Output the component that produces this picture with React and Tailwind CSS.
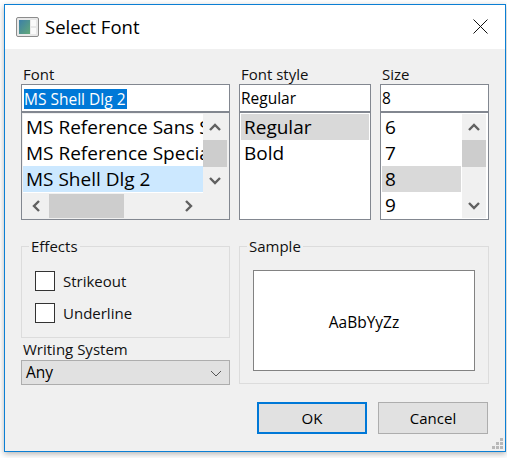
import React from 'react';

const font = { fontFamily: '"Open Sans", "Noto Sans", sans-serif' };

const Chevron = ({ dir, className = '' }) => {
  const paths = {
    up: 'M1 7 L6 2 L11 7',
    down: 'M1 2 L6 7 L11 2',
    left: 'M7 1 L2 6 L7 11',
    right: 'M2 1 L7 6 L2 11',
  };
  const vertical = dir === 'up' || dir === 'down';
  return (
    <svg width={vertical ? 12 : 9} height={vertical ? 9 : 12} viewBox={vertical ? '0 0 12 9' : '0 0 9 12'} className={className}>
      <path d={paths[dir]} fill="none" stroke="#606060" strokeWidth="2.4" />
    </svg>
  );
};

const VScroll = ({ height }) => (
  <div className={`w-6 ${height} bg-[#f0f0f0] flex flex-col items-center shrink-0`}>
    <div className="h-[26px] flex items-center justify-center"><Chevron dir="up" /></div>
    <div className="w-6 h-[27px] bg-[#cdcdcd]" />
    <div className="mt-auto h-[26px] flex items-center justify-center"><Chevron dir="down" /></div>
  </div>
);

const Row = ({ children, selected }) => (
  <div className={`h-[26px] leading-[27px] text-[19px] whitespace-nowrap overflow-hidden pl-[3px] ${selected || ''}`}>{children}</div>
);

const Label = ({ children }) => <div className="h-[19px] leading-[19px] text-[15px] text-[#111] pl-[2px]">{children}</div>;

const Field = ({ children }) => (
  <div className="h-[28px] border border-[#828790] bg-white flex items-center text-[15.5px] text-black pl-[1px] pt-[1px]">{children}</div>
);

const Check = ({ label }) => (
  <div className="flex items-center h-[20px] gap-2">
    <div className="w-5 h-5 border border-[#333] bg-white" />
    <span className="text-[15px] text-[#111]">{label}</span>
  </div>
);

const Legend = ({ children }) => (
  <span className="absolute -top-[11px] left-[7px] px-[2px] bg-[#f0f0f0] text-[15px] leading-[20px] text-[#111]">{children}</span>
);

const Btn = ({ children, focus }) => (
  <button className={`w-[110px] h-[32px] bg-[#e1e1e1] text-[15px] text-black pt-[1px] ${focus ? 'border-2 border-[#0078d7]' : 'border border-[#adadad]'}`}>{children}</button>
);

export default function App() {
  return (
    <div className="w-[507px] h-[458px] bg-white overflow-hidden pl-[4px] pt-[4px]" style={font}>
      <div className="w-[502px] h-[448px] border border-[#0b7fd4] bg-[#f0f0f0] shadow-[0_2px_6px_rgba(0,0,0,0.3)] flex flex-col">
        {/* Title bar */}
        <div className="h-[44px] bg-white flex items-center shrink-0 pl-[11px] pr-[17px]">
          <svg width="23" height="20" viewBox="0 0 23 20" className="mr-[6px] shrink-0">
            <defs>
              <linearGradient id="g" x1="0" y1="0" x2="1" y2="1">
                <stop offset="0" stopColor="#3c7fa8" />
                <stop offset="1" stopColor="#62a878" />
              </linearGradient>
            </defs>
            <rect x="0.5" y="0.5" width="22" height="19" rx="1.5" fill="#e8e8e8" stroke="#8c8c8c" />
            <rect x="3" y="3" width="11" height="14" fill="url(#g)" />
            <rect x="15" y="3" width="5" height="6" fill="#fafafa" />
            <rect x="15" y="11" width="5" height="6" fill="#fafafa" />
          </svg>
          <span className="text-[18.5px] text-black flex-1">Select Font</span>
          <svg width="15" height="15" viewBox="0 0 15 15" className="mb-[1px]">
            <path d="M0.5 0.5 L14.5 14.5 M14.5 0.5 L0.5 14.5" stroke="#111" strokeWidth="1" fill="none" />
          </svg>
        </div>

        <div className="relative flex-1 pl-[16px] pt-[16px]">
          {/* Top lists */}
          <div className="flex gap-[9px]">
            <div className="w-[209px]">
              <Label>Font</Label>
              <Field>
                <span className="ml-[1px] w-[103px] bg-[#0078d7] text-white h-[20px] leading-[20px] whitespace-nowrap overflow-hidden">MS Shell Dlg 2</span>
              </Field>
              <div className="h-[108px] border border-[#828790] bg-[#f0f0f0] pl-[1px]">
                <div className="flex pt-[1px]">
                  <div className="w-[180px] h-[79px] bg-white overflow-hidden">
                    <Row>MS Reference Sans Serif</Row>
                    <Row>MS Reference Specialty</Row>
                    <Row selected="bg-[#cce8ff]">MS Shell Dlg 2</Row>
                  </div>
                  <VScroll height="h-[79px]" />
                </div>
                <div className="flex items-center h-[26px]">
                  <div className="w-[26px] flex justify-center"><Chevron dir="left" /></div>
                  <div className="w-[75px] h-[24px] bg-[#cdcdcd]" />
                  <div className="w-[69px] flex justify-end"><Chevron dir="right" /></div>
                </div>
              </div>
            </div>

            <div className="w-[132px]">
              <Label>Font style</Label>
              <Field>Regular</Field>
              <div className="h-[108px] border border-[#828790] bg-white pt-[1px] px-[1px]">
                <Row selected="bg-[#d9d9d9]">Regular</Row>
                <Row>Bold</Row>
              </div>
            </div>

            <div className="w-[109px]">
              <Label>Size</Label>
              <Field>8</Field>
              <div className="h-[108px] border border-[#828790] bg-white pt-[1px] pl-[1px] flex">
                <div className="w-[79px] mr-[1px]">
                  <Row>6</Row>
                  <Row>7</Row>
                  <Row selected="bg-[#d9d9d9]">8</Row>
                  <Row>9</Row>
                </div>
                <VScroll height="h-[104px]" />
              </div>
            </div>
          </div>

          {/* Lower panels */}
          <div className="flex gap-[9px] mt-[26px]">
            <div className="w-[209px]">
              <div className="relative h-[92px] border border-[#dcdcdc] pt-[24px] pl-[13px] flex flex-col gap-[12px]">
                <Legend>Effects</Legend>
                <Check label="Strikeout" />
                <Check label="Underline" />
              </div>
              <div className="mt-[2px]">
                <div className="h-[20px] leading-[18px] text-[15px] text-[#111] pl-[2px]">Writing System</div>
              </div>
              <div className="h-[25px] border border-[#adadad] bg-[#e1e1e1] flex items-center justify-between pl-[4px] pr-[7px] pt-[1px] text-[15.5px] text-black">
                <span>Any</span>
                <svg width="12" height="7" viewBox="0 0 12 7">
                  <path d="M1 1 L6 6 L11 1" fill="none" stroke="#555" strokeWidth="1" />
                </svg>
              </div>
            </div>

            <div className="relative w-[250px] h-[138px] border border-[#dcdcdc] pt-[23px] px-[13px]">
              <Legend>Sample</Legend>
              <div className="h-[101px] bg-white border border-[#828282] flex items-center justify-center pt-[4px] text-[15.5px] text-black">AaBbYyZz</div>
            </div>
          </div>

          {/* Buttons */}
          <div className="flex justify-end gap-[11px] mt-[17px] pr-[17px]">
            <Btn focus>OK</Btn>
            <Btn>Cancel</Btn>
          </div>

          {/* Size grip */}
          <svg width="11" height="11" viewBox="0 0 11 11" className="absolute right-[2px] bottom-[2px]">
            <g fill="#b8b8b8">
              <rect x="8" y="0" width="3" height="3" />
              <rect x="4" y="4" width="3" height="3" />
              <rect x="8" y="4" width="3" height="3" />
              <rect x="0" y="8" width="3" height="3" />
              <rect x="4" y="8" width="3" height="3" />
              <rect x="8" y="8" width="3" height="3" />
            </g>
          </svg>
        </div>
      </div>
    </div>
  );
}
